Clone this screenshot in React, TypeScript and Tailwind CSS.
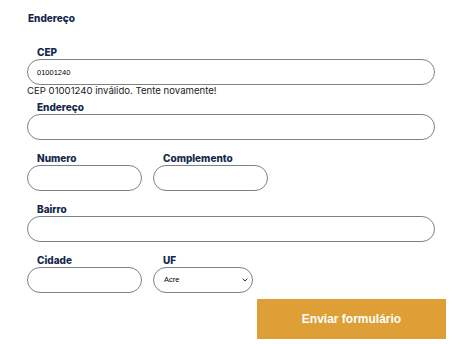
import React from 'react';

const labelCls = "block h-[14px] pl-[10px] text-[10px] leading-[14px] font-extrabold text-[#14284b]";
const inputCls = "block h-[26px] w-full rounded-full border border-[#7d8189] bg-white px-[9px] text-[7.5px] text-black outline-none";

function Field({ label, className = '', children }: { label: string; className?: string; children?: React.ReactNode }) {
  return (
    <div className={className}>
      <label className={labelCls}>{label}</label>
      {children ?? <input className={inputCls} style={{ fontFamily: '"Liberation Sans", Arial, sans-serif' }} />}
    </div>
  );
}

export default function App() {
  return (
    <div className="min-h-screen w-[474px] bg-white" style={{ fontFamily: 'Inter, "Noto Sans", sans-serif' }}>
      <div className="pl-[27px] pt-[11px]">
        <h2 className="pl-[1px] h-[14px] text-[10px] leading-[14px] font-extrabold text-[#14284b]">Endereço</h2>

        <div className="w-[408px] mt-[20px]">
          <label className={labelCls}>CEP</label>
          <input
            defaultValue="01001240"
            className={inputCls}
            style={{ fontFamily: '"Liberation Sans", Arial, sans-serif' }}
          />
          <p className="h-[12px] text-[9.6px] leading-[12px] text-[#1a1a1a]">CEP 01001240 inválido. Tente novamente!</p>

          <Field label="Endereço" className="mt-[3px]" />

          <div className="flex gap-[11px] mt-[11px]">
            <Field label="Numero" className="w-[115px]" />
            <Field label="Complemento" className="w-[115px]" />
          </div>

          <Field label="Bairro" className="mt-[11px]" />

          <div className="flex gap-[11px] mt-[11px]">
            <Field label="Cidade" className="w-[115px]" />
            <Field label="UF" className="w-[100px]">
              <div className="relative">
                <select
                  className="block h-[26px] w-full appearance-none rounded-full border border-[#7d8189] bg-white pl-[10px] pr-[14px] text-[7.5px] text-black outline-none"
                  style={{ fontFamily: '"Liberation Sans", Arial, sans-serif' }}
                  defaultValue="AC"
                >
                  <option value="AC">Acre</option>
                  <option value="AL">Alagoas</option>
                </select>
                <svg className="pointer-events-none absolute right-[5px] top-[11px]" width="6" height="4" viewBox="0 0 6 4" fill="none">
                  <path d="M0.6 0.6 L3 3 L5.4 0.6" stroke="#333" strokeWidth="1" />
                </svg>
              </div>
            </Field>
          </div>
        </div>

        <div className="flex justify-end pr-[28px] mt-[6px]">
          <button
            className="h-[40px] w-[189px] bg-[#de9f36] text-[12px] font-bold text-white"
            style={{ fontFamily: '"Liberation Sans", Arial, sans-serif' }}
          >
            Enviar formulário
          </button>
        </div>
      </div>
    </div>
  );
}
